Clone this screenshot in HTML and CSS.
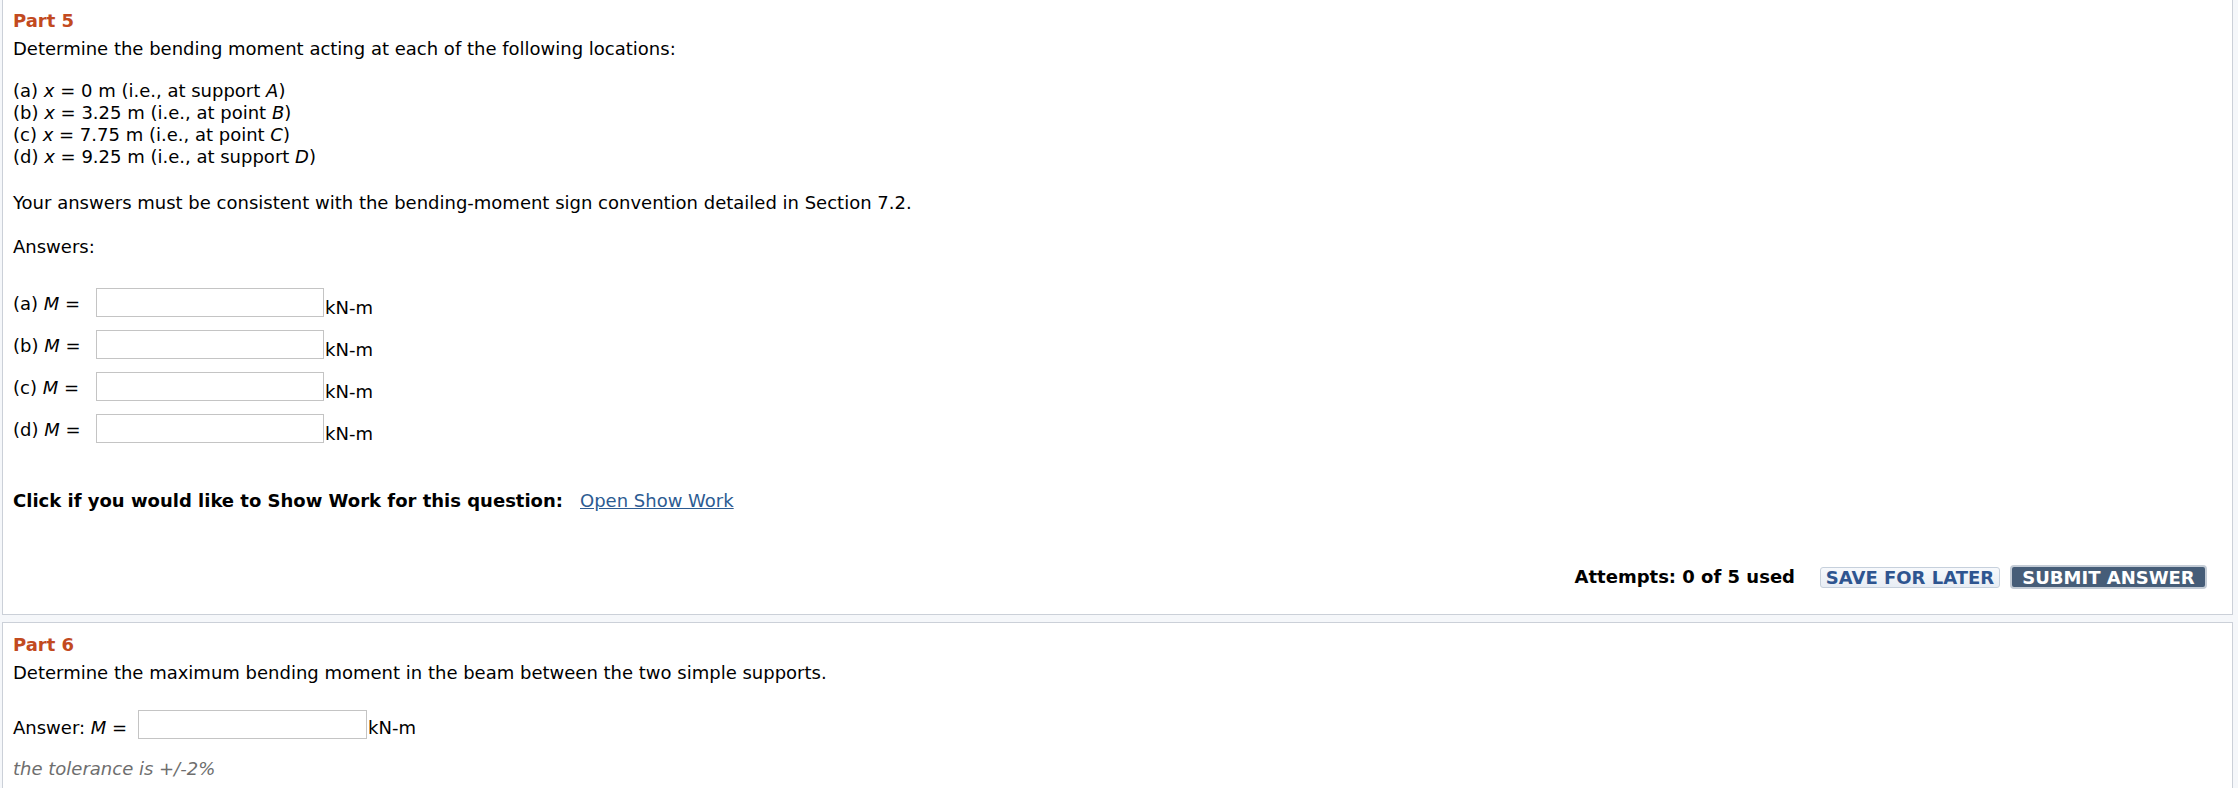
FILE: index.html
```html
<!DOCTYPE html>
<html lang="en">
<head>
<meta charset="utf-8">
<title>Part 5 / Part 6</title>
<link rel="stylesheet" href="styles.css">
</head>
<body>
<div class="panel panel-first">
  <div class="part-title">Part 5</div>
  <p class="q">Determine the bending moment acting at each of the following locations:</p>
  <p class="list">(a) <i>x</i> = 0 m (i.e., at support <i>A</i>)<br>(b) <i>x</i> = 3.25 m (i.e., at point <i>B</i>)<br>(c) <i>x</i> = 7.75 m (i.e., at point <i>C</i>)<br>(d) <i>x</i> = 9.25 m (i.e., at support <i>D</i>)</p>
  <p class="note">Your answers must be consistent with the bending-moment sign convention detailed in Section 7.2.</p>
  <p class="answers">Answers:</p>
  <div class="rows">
    <div class="row"><span class="lbl">(a) <i>M</i> =</span><span class="box"></span><span class="unit">kN-m</span></div>
    <div class="row"><span class="lbl">(b) <i>M</i> =</span><span class="box"></span><span class="unit">kN-m</span></div>
    <div class="row"><span class="lbl">(c) <i>M</i> =</span><span class="box"></span><span class="unit">kN-m</span></div>
    <div class="row"><span class="lbl">(d) <i>M</i> =</span><span class="box"></span><span class="unit">kN-m</span></div>
  </div>
  <p class="showwork"><b>Click if you would like to Show Work for this question:</b><a class="link" href="#">Open Show Work</a></p>
  <div class="actions">
    <span class="attempts">Attempts: 0 of 5 used</span>
    <span class="btn btn-save">SAVE FOR LATER</span>
    <span class="btn btn-submit">SUBMIT ANSWER</span>
  </div>
</div>
<div class="panel panel-second">
  <div class="part-title">Part 6</div>
  <p class="q">Determine the maximum bending moment in the beam between the two simple supports.</p>
  <div class="row row-single"><span class="lbl2">Answer: <i>M</i> =</span><span class="box box2"></span><span class="unit2">kN-m</span></div>
  <p class="tol">the tolerance is +/-2%</p>
</div>
</body>
</html>
```

FILE: styles.css
```css
html, body {
  margin: 0;
  padding: 0;
  background: #f5f7fa;
}
body {
  font-family: "DejaVu Sans", Verdana, sans-serif;
  font-size: 18px;
  line-height: 22px;
  color: #000;
  padding: 0 5px 0 2px;
  overflow: hidden;
}
.panel {
  background: #fff;
  border: 1px solid #cbd0d8;
  padding: 0 10px;
}
.panel-first {
  margin-top: -1px;
  padding-top: 10px;
  padding-bottom: 25px;
}
.panel-second {
  margin-top: 7px;
  padding-top: 11px;
  padding-bottom: 40px;
}
.part-title {
  color: #c24a1f;
  font-weight: bold;
}
p { margin: 0; }
.q { margin-top: 6px; }
.list { margin-top: 20px; }
.note { margin-top: 24px; }
.answers { margin-top: 22px; }
.rows {
  margin-top: 30px;
  display: flex;
  flex-direction: column;
  gap: 13px;
}
.row {
  display: flex;
  align-items: center;
}
.lbl {
  width: 83px;
  padding-top: 3px;
}
.box {
  width: 226px;
  height: 27px;
  border: 1px solid #c4c4c4;
  background: #fff;
}
.unit {
  align-self: flex-end;
  line-height: 18px;
  margin-left: 1px;
}
.showwork { margin-top: 47px; }
.link {
  color: #2c5b92;
  text-decoration: underline;
  margin-left: 17px;
}
.actions {
  margin-top: 53px;
  display: flex;
  justify-content: flex-end;
  align-items: center;
  padding-right: 15px;
}
.attempts {
  font-weight: bold;
  margin-right: 25px;
}
.btn {
  font-weight: bold;
  font-size: 18px;
  line-height: 18px;
  white-space: nowrap;
  box-sizing: border-box;
  text-align: center;
}
.btn-save {
  width: 180px;
  height: 21px;
  padding-top: 1px;
  border-radius: 3px;
  color: #2e5590;
  background: linear-gradient(#f7f9fc, #e8edf4);
  border: 1px solid #c6d0dc;
}
.btn-submit {
  width: 197px;
  height: 24px;
  padding-top: 2px;
  margin-left: 10px;
  border-radius: 4px;
  color: #fff;
  background: #465d78;
  border: 2px solid #c4ccd6;
}
.row-single { margin-top: 26px; align-items: center; }
.lbl2 { width: 125px; padding-top: 7px; }
.box2 { width: 227px; }
.unit2 { padding-top: 7px; margin-left: 1px; }
.tol {
  margin-top: 19px;
  color: #6e6e6e;
  font-style: italic;
}
```
